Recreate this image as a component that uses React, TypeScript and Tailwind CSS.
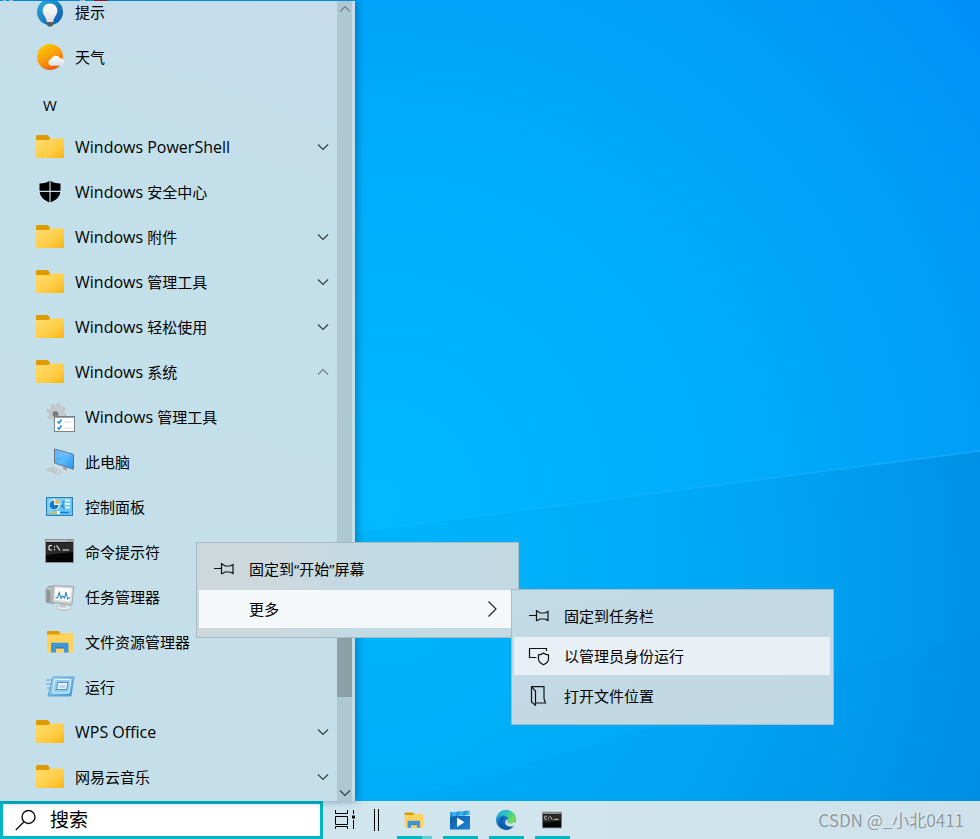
import { useState } from 'react';
import type { ReactNode } from 'react';

type IconName =
  | 'tips' | 'weather' | 'folder' | 'shield' | 'tools' | 'pc'
  | 'control' | 'cmd' | 'taskmgr' | 'explorer' | 'run';

interface Entry {
  label: string;
  icon?: IconName;
  nested?: boolean;
  chevron?: 'down' | 'up';
}

interface MenuEntry {
  label: string;
  icon?: ReactNode;
  active?: boolean;
  submenu?: boolean;
}

const ENTRIES: Entry[] = [
  { label: '提示', icon: 'tips' },
  { label: '天气', icon: 'weather' },
  { label: 'W' },
  { label: 'Windows PowerShell', icon: 'folder', chevron: 'down' },
  { label: 'Windows 安全中心', icon: 'shield' },
  { label: 'Windows 附件', icon: 'folder', chevron: 'down' },
  { label: 'Windows 管理工具', icon: 'folder', chevron: 'down' },
  { label: 'Windows 轻松使用', icon: 'folder', chevron: 'down' },
  { label: 'Windows 系统', icon: 'folder', chevron: 'up' },
  { label: 'Windows 管理工具', icon: 'tools', nested: true },
  { label: '此电脑', icon: 'pc', nested: true },
  { label: '控制面板', icon: 'control', nested: true },
  { label: '命令提示符', icon: 'cmd', nested: true },
  { label: '任务管理器', icon: 'taskmgr', nested: true },
  { label: '文件资源管理器', icon: 'explorer', nested: true },
  { label: '运行', icon: 'run', nested: true },
  { label: 'WPS Office', icon: 'folder', chevron: 'down' },
  { label: '网易云音乐', icon: 'folder', chevron: 'down' },
];

// Gradients shared by all icons
function IconDefs() {
  return (
    <svg className="absolute h-0 w-0" aria-hidden="true">
      <defs>
        <linearGradient id="folderFront" x1="0" y1="0" x2="1" y2="1">
          <stop offset="0" stopColor="#ffdc70" />
          <stop offset="0.6" stopColor="#ffcd45" />
          <stop offset="1" stopColor="#f8b411" />
        </linearGradient>
        <linearGradient id="tipsBlue" x1="0" y1="0" x2="1" y2="1">
          <stop offset="0" stopColor="#2fb0e0" />
          <stop offset="1" stopColor="#0a55a8" />
        </linearGradient>
        <linearGradient id="sun" x1="0" y1="0" x2="0.6" y2="1">
          <stop offset="0" stopColor="#ffd500" />
          <stop offset="0.6" stopColor="#fb9a0a" />
          <stop offset="1" stopColor="#e8590c" />
        </linearGradient>
        <linearGradient id="cloud" x1="0" y1="0" x2="0" y2="1">
          <stop offset="0" stopColor="#ffffff" />
          <stop offset="1" stopColor="#dcdfe3" />
        </linearGradient>
        <linearGradient id="screen" x1="0" y1="0" x2="1" y2="1">
          <stop offset="0" stopColor="#3da4f5" />
          <stop offset="0.5" stopColor="#5dbbff" />
          <stop offset="1" stopColor="#2590e8" />
        </linearGradient>
        <linearGradient id="runPlate" x1="0" y1="0" x2="1" y2="1">
          <stop offset="0" stopColor="#b9e2f8" />
          <stop offset="1" stopColor="#3f96d6" />
        </linearGradient>
        <linearGradient id="edgeGreen" x1="0" y1="0" x2="1" y2="0.5">
          <stop offset="0" stopColor="#27a8e0" />
          <stop offset="0.5" stopColor="#2fc3c0" />
          <stop offset="1" stopColor="#6fe050" />
        </linearGradient>
        <linearGradient id="edgeBlue" x1="0" y1="0" x2="0.7" y2="1">
          <stop offset="0" stopColor="#1e9de0" />
          <stop offset="1" stopColor="#0c4fa0" />
        </linearGradient>
        <linearGradient id="film" x1="0" y1="0" x2="1" y2="1">
          <stop offset="0" stopColor="#0f5ca8" />
          <stop offset="1" stopColor="#1d86d8" />
        </linearGradient>
      </defs>
    </svg>
  );
}

const ICONS: Record<IconName, ReactNode> = {
  tips: (
    <>
      <circle cx="14" cy="14" r="13" fill="url(#tipsBlue)" />
      <path d="M14 5.5c-4.5 0-7.3 3.2-7.3 7.2 0 4.4 3.8 6.3 4.2 11.3h6.200c.4-5 4.200-6.900 4.200-11.300 0-4-2.800-7.200-7.300-7.200z" fill="url(#cloud)" />
      <path d="M10.500 24h7v2l-1.500 2.500h-4L10.500 26z" fill="#565d63" />
    </>
  ),
  weather: (
    <>
      <circle cx="14" cy="14" r="13" fill="url(#sun)" />
      <path d="M15 22.800a3.500 3.500 0 0 1 0-6.800 5 5 0 0 1 9-.8 3.900 3.900 0 0 1 1.500 7.600z" fill="url(#cloud)" />
    </>
  ),
  folder: (
    <>
      <path d="M0 3.500C0 2.500.5 2 1.500 2h10.300l2.200 3v3H0z" fill="#dd9b00" />
      <path d="M0 7h12.500l2-1.500H26.500c1 0 1.500.5 1.500 1.500v16.500c0 1-.5 1.500-1.500 1.500h-25C.5 25 0 24.500 0 23.500z" fill="url(#folderFront)" />
    </>
  ),
  shield: (
    <>
      <path d="M14 2.500c2.300 2 6 3 10.500 3v6.500c0 6.500-4.500 10.500-10.500 12.500C8 22.500 3.500 18.500 3.500 12V5.500c4.500 0 8.200-1 10.500-3z" fill="#000" />
      <path d="M14 2v23M3 13.300h22" stroke="#c5dfe9" strokeWidth="1.200" />
    </>
  ),
  tools: (
    <>
      <circle cx="10.500" cy="10" r="8" fill="none" stroke="#bfc3c5" strokeWidth="3.500" strokeDasharray="3.600 2.680" />
      <circle cx="10.500" cy="10" r="5.200" fill="none" stroke="#c6c9cb" strokeWidth="5" />
      <circle cx="9.500" cy="11" r="3" fill="#737d82" />
      <rect x="8.500" y="13.500" width="20" height="15" fill="#fff" stroke="#7c8388" />
      <path d="M9 14.500h19" stroke="#9aa1a6" />
      <path d="M11.500 18.500l1.500 1.500 2.500-3.500M11.500 24.500l1.500 1.500 2.500-3.500" stroke="#2289d6" strokeWidth="1.500" fill="none" />
      <path d="M18 19h7M18 25h7" stroke="#d5d8da" />
    </>
  ),
  pc: (
    <>
      <path d="M13 20.500l8-1.500 4 4-6 2z" fill="#d9dcdf" />
      <path d="M17 18l4 1v4l-4-1.500z" fill="#a4abb1" />
      <path d="M8.500 1l19 5.300v15L8.500 15z" fill="url(#screen)" stroke="#69747d" />
      <path d="M9 11L24 5.500 9 1.500z" fill="#fff" opacity=".14" />
      <path d="M-.5 21.500L7 19.500l10 5-3.500 2.500z" fill="#dfe1e3" stroke="#b3b8bb" strokeWidth=".6" />
      <path d="M3 21.500l9 4.500M5 20.500l10 5M2 22l6-2M6 24l5-2" stroke="#a7acb0" strokeWidth=".6" />
    </>
  ),
  control: (
    <>
      <rect x=".5" y="4.500" width="26" height="18" fill="#66c3f3" stroke="#2f7fae" />
      <path d="M1.500 21.500v-16h24z" fill="#8ed7fb" opacity=".6" />
      <circle cx="8.500" cy="11.500" r="5.500" fill="#e4f4fd" />
      <path d="M8 12V7.500a4.500 4.500 0 1 0 4.500 4.500z" fill="#1878c8" />
      <path d="M9.300 10.700V6.500a4.500 4.500 0 0 1 4.300 4.200z" fill="#f3b13c" />
      <path d="M14.500 13h2.500M17 8v7M17 8h2M17 15h2" stroke="#1878c8" fill="none" />
      <path d="M19 7.500h5M19 11h5M19 14.500h5" stroke="#eaf7ff" strokeWidth="2" />
      <path d="M4 19.500h7" stroke="#f3b13c" strokeWidth="1.500" />
      <path d="M14 19.500h9" stroke="#1878c8" strokeWidth="1.500" />
      <rect x="11" y="18" width="3" height="3" fill="#fff" />
    </>
  ),
  cmd: (
    <>
      <rect x="-.5" y="1.500" width="28" height="23" fill="#050505" stroke="#8b9093" />
      <path d="M0 3h27" stroke="#b4b9bc" strokeWidth="2" />
      <path d="M21 3h5" stroke="#6e757a" strokeDasharray="1 1" />
      <path d="M0 4.500h27V14L0 17z" fill="#3a3a3a" opacity=".7" />
      <path d="M6 7.500H4c-.7 0-1 .4-1 1V11c0 .7.400 1 1 1h2M8.500 8.200v1.300M8.500 11v1.300M10.500 7.500l3.500 5M16.500 12H23" stroke="#f1f1f1" strokeWidth="1.200" fill="none" />
    </>
  ),
  taskmgr: (
    <>
      <path d="M0 6l3-3 5 .5V21L0 19z" fill="#b9bdc0" stroke="#898f93" strokeWidth=".7" />
      <path d="M.5 7l4 .5V20l-4-1z" fill="#8e9599" />
      <rect x="1" y="8" width="1.500" height="1.500" fill="#4fc23b" />
      <ellipse cx="18" cy="24.500" rx="7.500" ry="2.700" fill="#e6e8ea" stroke="#a9aeb2" strokeWidth=".8" />
      <path d="M14 20h6v4.500h-6z" fill="#c4c8cb" />
      <path d="M7.300 2.500l20.500 1L26 21.500 6.500 19.300z" fill="#d4d6d8" stroke="#969b9f" strokeWidth=".8" />
      <path d="M9.300 4.500l16.500 1L24.300 18.500 8.700 16.800z" fill="#fbfdff" />
      <path d="M9.500 14.500l2 .3 1.700-5.300 1.800 6 1.500-2.500 2 2 1.500-6 1.500 7 2.500-1.500" fill="none" stroke="#3488bd" strokeWidth="1.100" />
    </>
  ),
  explorer: (
    <>
      <path d="M1 4c0-.7.300-1 1-1h10.500l1.500 2v3H1z" fill="#dd9b00" />
      <path d="M1 6.500h12L14.500 5H27v19.500H1z" fill="#ffd35c" />
      <path d="M5 24.500V16c0-.8.500-1.300 1.300-1.300h14.900c.8 0 1.300.5 1.300 1.300v8.500H18V20h-8v4.500z" fill="#3b96dc" />
      <path d="M10 20h8" stroke="#236fae" />
    </>
  ),
  run: (
    <>
      <path d="M0 7h6M0 11h5M1 15h4" stroke="#7cbde5" strokeWidth="1.500" />
      <path d="M7 4h21L25 23H2z" fill="url(#runPlate)" stroke="#4a97c8" strokeWidth=".8" />
      <path d="M9 6.500h16L23 20H6.500z" fill="#8fcdf0" stroke="#e1f4fe" />
      <path d="M12 9.500h10l-1.500 7h-10z" fill="#f5fbff" stroke="#4a8fcb" />
      <path d="M12.500 15l1-3.500h6.500l-.8 3.500z" fill="#bfd7f2" />
    </>
  ),
};

function Chevron({ up }: { up?: boolean }) {
  return (
    <svg viewBox="0 0 12 8" className="h-2 w-3 flex-shrink-0" aria-hidden="true">
      <path
        d={up ? 'M1 6.500L6 1.500l5 5' : 'M1 1.500l5 5 5-5'}
        fill="none"
        stroke={up ? '#6f7f86' : '#2f3b40'}
        strokeWidth="1.100"
      />
    </svg>
  );
}

// Latin words are set one size up so they sit evenly beside the Chinese glyphs
function Label({ text }: { text: string }) {
  const [, latin, rest] = text.match(/^([\x20-\x7e]*)(.*)$/) ?? ['', '', text];
  return (
    <>
      {latin && <span className="text-base leading-5">{latin}</span>}
      {rest}
    </>
  );
}

function EntryRow({ entry }: { entry: Entry }) {
  if (!entry.icon) {
    return (
      <button className="flex h-[45px] w-full flex-shrink-0 items-center pl-[43px] pt-1 text-left">
        {entry.label}
      </button>
    );
  }
  return (
    <button
      className={`flex h-[45px] w-full flex-shrink-0 items-center gap-[11px] pr-2 text-left ${
        entry.nested ? 'pl-[46px]' : 'pl-9'
      }`}
    >
      <svg viewBox="0 0 28 29" className="h-[29px] w-7 flex-shrink-0 overflow-visible" aria-hidden="true">
        {ICONS[entry.icon]}
      </svg>
      <span className="flex-1 whitespace-nowrap pb-0.5"><Label text={entry.label} /></span>
      {entry.chevron && <span className="pb-0.5"><Chevron up={entry.chevron === 'up'} /></span>}
    </button>
  );
}

function PinIcon() {
  return (
    <svg viewBox="0 0 20 20" className="h-5 w-5" fill="none" stroke="#111" strokeWidth="1.200" aria-hidden="true">
      <path d="M0 9.500h7.500M7.500 4v11M7.500 4.500l3.500 2.500h5l3-1.500v9L16 13h-5l-3.500 2" />
    </svg>
  );
}

function AdminIcon() {
  return (
    <svg viewBox="0 0 20 20" className="h-5 w-5 overflow-visible" fill="none" stroke="#111" strokeWidth="1.200" aria-hidden="true">
      <path d="M17.500 5V2.500H.5v9h7" />
      <path d="M14.500 7c1.500 1.300 3 1.800 5 1.800v4c0 3-2 4.700-5 6-3-1.300-5-3-5-6v-4c2 0 3.500-.5 5-1.800z" />
    </svg>
  );
}

function OpenLocationIcon() {
  return (
    <svg viewBox="0 0 20 20" className="h-5 w-5" fill="none" stroke="#111" strokeWidth="1.200" aria-hidden="true">
      <path d="M2.500.7h12.500v12l1.500 4.300H7M2.500.7V16l4 3.300V5z" />
    </svg>
  );
}

const APP_MENU: MenuEntry[] = [
  { label: '固定到“开始”屏幕', icon: <PinIcon /> },
  { label: '更多', active: true, submenu: true },
];

const MORE_MENU: MenuEntry[] = [
  { label: '固定到任务栏', icon: <PinIcon /> },
  { label: '以管理员身份运行', icon: <AdminIcon />, active: true },
  { label: '打开文件位置', icon: <OpenLocationIcon /> },
];

function ContextMenu({ items, className, activeClass }: { items: MenuEntry[]; className: string; activeClass: string }) {
  return (
    <div
      role="menu"
      className={`absolute flex w-[323px] flex-col gap-0.5 border border-[#a9bac2] pb-[9px] pl-0.5 pr-[3px] pt-[7px] ${className}`}
    >
      {items.map(item => (
        <button
          key={item.label}
          role="menuitem"
          className={`flex h-[38px] items-center gap-[15px] pl-[15px] pr-[18px] text-left ${item.active ? activeClass : ''}`}
        >
          <span className="h-5 w-5 flex-shrink-0">{item.icon}</span>
          <span className="flex-1 whitespace-nowrap">{item.label}</span>
          {item.submenu && (
            <svg viewBox="0 0 10 16" className="h-4 w-2.5" fill="none" stroke="#222" strokeWidth="1.200" aria-hidden="true">
              <path d="M1.500 .5L9 8 1.500 15.500" />
            </svg>
          )}
        </button>
      ))}
    </div>
  );
}

function Wallpaper() {
  return (
    <svg
      viewBox="0 0 980 801"
      preserveAspectRatio="none"
      className="absolute inset-0 h-full w-full"
      aria-hidden="true"
    >
      <defs>
        <radialGradient id="sky" gradientUnits="userSpaceOnUse" cx="380" cy="500" r="800">
          <stop offset="0" stopColor="#00b9ff" />
          <stop offset="0.45" stopColor="#00acfc" />
          <stop offset="0.75" stopColor="#009ef8" />
          <stop offset="1" stopColor="#008ef8" />
        </radialGradient>
        <radialGradient id="floor" gradientUnits="userSpaceOnUse" cx="380" cy="580" r="700">
          <stop offset="0" stopColor="#00b5fc" />
          <stop offset="0.5" stopColor="#00a8f5" />
          <stop offset="1" stopColor="#008ae2" />
        </radialGradient>
        <linearGradient id="beam" gradientUnits="userSpaceOnUse" x1="355" y1="0" x2="980" y2="0">
          <stop offset="0" stopColor="#20c0ff" stopOpacity=".2" />
          <stop offset="1" stopColor="#30b4ff" stopOpacity=".5" />
        </linearGradient>
      </defs>
      <rect width="980" height="801" fill="url(#sky)" />
      <path d="M0 577L355 532 980 451v350H0z" fill="url(#floor)" />
      <path d="M355 532L980 451" stroke="url(#beam)" strokeWidth="1.500" />
      <path d="M400 801L980 632v169z" fill="#007fe0" opacity=".05" />
      <path d="M3 0h3v1H3zM9 0h4v1H9zM80 0h5v1h-5z" fill="#fff" opacity=".7" />
      <path d="M94 0h14v1H94z" fill="#a01020" />
    </svg>
  );
}

function StartMenu() {
  return (
    <nav
      aria-label="所有应用"
      className="relative mt-px flex w-[355px] bg-[linear-gradient(200deg,#c6dcea_0%,#c5ddea_12%,#c3e0ea_24%,#c4dfe9_60%,#c5dfea_100%)] shadow-[2px_0_8px_rgba(0,60,110,0.45)]"
    >
      <div className="flex min-w-0 flex-1 flex-col justify-end overflow-hidden pb-px">
        {ENTRIES.map((entry, i) => (
          <EntryRow key={i} entry={entry} />
        ))}
      </div>

      {/* Scrollbar */}
      <div className="mr-[3px] flex w-[15px] flex-col items-center justify-between bg-[#aec8d2] py-1">
        <Chevron up />
        <div className="flex w-full flex-1 flex-col justify-end pb-[92px]">
          <div className="h-32 bg-[#8b9fa7]" />
        </div>
        <Chevron />
      </div>
    </nav>
  );
}

function TaskViewIcon() {
  return (
    <svg viewBox="0 0 22 20" className="h-5 w-[22px]" fill="none" stroke="#000" aria-hidden="true">
      <path d="M1.500 0v3.500h12V0M1.500 6.500h12v8h-12zM1.500 19v-2.500h12V19M19.500 0v4M19.500 10v9" />
      <path d="M18 5.500h3v3h-3z" fill="#000" stroke="none" />
    </svg>
  );
}

function MediaIcon() {
  return (
    <svg viewBox="0 0 20 20" className="h-5 w-5" aria-hidden="true">
      <path d="M0 6h20v12.500c0 .7-.3 1-1 1H1c-.7 0-1-.3-1-1z" fill="url(#film)" />
      <path d="M0 2.500L19.500.5V5L0 6.500z" fill="#35b4ea" />
      <path d="M0 2.500l3-.3-1 4.100-2 .2zM7 1.800l3-.3-1.500 4.300-3 .2zM14 1l3-.3-1.500 4.600-3 .2z" fill="#2a93d6" />
      <path d="M7 7.500l7.500 4.700L7 17z" fill="#fff" />
    </svg>
  );
}

function EdgeIcon() {
  return (
    <svg viewBox="0 0 20 20" className="h-5 w-5" aria-hidden="true">
      <circle cx="10" cy="10" r="10" fill="url(#edgeBlue)" />
      <path d="M0 9.500C.5 4 4.800 0 10 0c5.800 0 10 4 10 8.500 0 3.200-2.300 5-5 5-2.200 0-3.700-.8-3.700-1.600 0-.6.900-1 .9-2.500 0-2-2-3.800-4.700-3.800C3.800 5.600 1 7.300 0 9.500z" fill="url(#edgeGreen)" />
      <path d="M7.200 9.500c-1.500 4.500 2 9.500 7.300 9.300C9 21.500 3 18 3 12.500 3 9.500 5 7 7.700 6.500c1.500.2 1 1.500-.5 3z" fill="#0d58a8" opacity=".75" />
      <path d="M12.200 9.300c0 1.500-.9 2-.9 2.600 0 .8 1.500 1.600 3.700 1.600 1.700 0 3.200-.7 4.100-2l1.400 1.500-1.300 2.500c-1.500 1.300-6.700 1.800-9-.5-1.700-1.800-1.200-5 2-5.700z" fill="#d2e6ee" />
    </svg>
  );
}

function TaskbarButton({ label, grouped, children }: { label: string; grouped?: boolean; children: ReactNode }) {
  return (
    <button aria-label={label} className="flex w-[35px] flex-col items-center">
      <span className="flex flex-1 items-center pr-px pt-[3px]">{children}</span>
      <span className="flex h-[3px] w-full">
        <span className="flex-1 bg-[#00b7c3]" />
        {grouped && <span className="w-2.5 bg-[#5fd0d8]" />}
      </span>
    </button>
  );
}

function Taskbar() {
  const [query, setQuery] = useState('');

  return (
    <footer className="flex h-[38px] flex-shrink-0 bg-[linear-gradient(90deg,#d2e6ee,#d0e5ed_60%,#cfe2ec)]">
      <label className="flex w-[323px] items-center gap-[13px] border-[3px] border-[#00b7c3] bg-white pl-3">
        <svg viewBox="0 0 22 22" className="h-[22px] w-[22px]" fill="none" stroke="#111" strokeWidth="1.400" aria-hidden="true">
          <circle cx="13.500" cy="8" r="6.500" />
          <path d="M9 12.800L.8 21" />
        </svg>
        <input
          type="text"
          aria-label="搜索"
          placeholder="搜索"
          value={query}
          onChange={e => setQuery(e.target.value)}
          className="min-w-0 flex-1 text-[19px] leading-7 placeholder:text-black focus:outline-none"
        />
      </label>

      <button aria-label="任务视图" className="ml-[11px] flex items-center">
        <TaskViewIcon />
      </button>
      <span className="my-2 ml-[18px] mr-[18px] w-[5px] border-x border-black" />

      <div className="flex gap-[11px]">
        <TaskbarButton label="文件资源管理器" grouped>
          <svg viewBox="0 0 28 27" className="h-5 w-5" aria-hidden="true">{ICONS.explorer}</svg>
        </TaskbarButton>
        <TaskbarButton label="电影和电视"><MediaIcon /></TaskbarButton>
        <TaskbarButton label="Microsoft Edge"><EdgeIcon /></TaskbarButton>
        <TaskbarButton label="命令提示符">
          <svg viewBox="-1 -1 29 28" className="h-5 w-5" aria-hidden="true">{ICONS.cmd}</svg>
        </TaskbarButton>
      </div>

      <p className="ml-auto self-center pr-4 font-['Noto_Sans_CJK_SC',sans-serif] text-[17px] leading-6 text-[#8f999e] [text-shadow:-1px_-1px_0_#e6f0f4]">
        CSDN @_小北0411
      </p>
    </footer>
  );
}

export default function App() {
  return (
    <div className="flex h-screen flex-col overflow-hidden font-['Open_Sans','Noto_Sans_CJK_SC',sans-serif] text-[15px] leading-5 text-black">
      <IconDefs />
      <main className="relative flex min-h-0 flex-1">
        <Wallpaper />
        <StartMenu />
        <ContextMenu
          items={APP_MENU}
          className="left-[196px] top-[542px] bg-[linear-gradient(100deg,#cdd7dc_0%,#cdd8dd_25%,#c2dae4_50%,#c3dae3_100%)]"
          activeClass="bg-[#f4f8fb]"
        />
        <ContextMenu
          items={MORE_MENU}
          className="left-[511px] top-[589px] bg-[linear-gradient(170deg,#c2dbe5,#c3d9e5_50%,#c1d9e3)]"
          activeClass="bg-[#e8f0f5]"
        />
      </main>
      <Taskbar />
    </div>
  );
}
